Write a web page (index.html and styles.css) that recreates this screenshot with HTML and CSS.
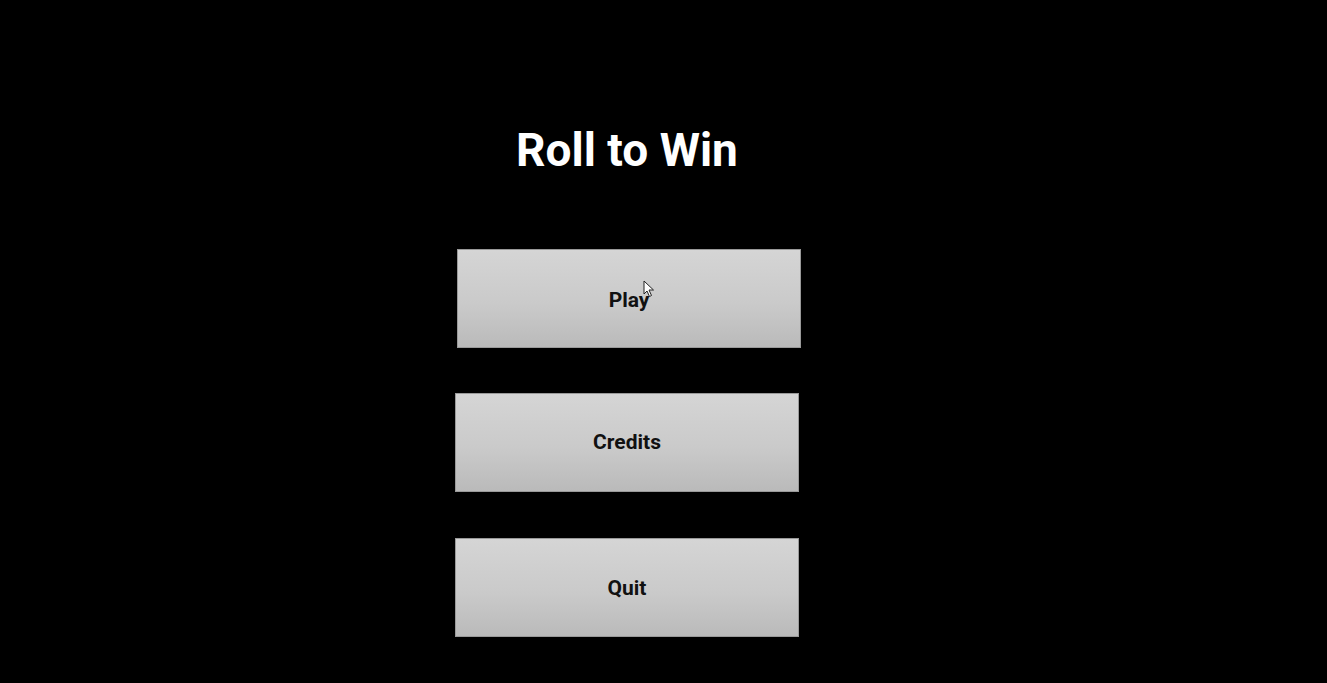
FILE: index.html
```html
<!DOCTYPE html>
<html lang="en">
<head>
    <meta charset="UTF-8">
    <title>Roll to Win</title>
    <link rel="stylesheet" href="styles.css">
</head>
<body>
<div class="menu">
    <h1 class="title">Roll to Win</h1>
    <a class="btn btn-play" href="#play">Play</a>
    <a class="btn btn-credits" href="#credits">Credits</a>
    <a class="btn btn-quit" href="#quit">Quit</a>
</div>
<svg class="cursor" width="12" height="18" viewBox="0 0 12 18">
    <path d="M1 1 L1 14 L4 11 L6.5 16.5 L8.5 15.5 L6 10 L10.5 10 Z" fill="#fff" stroke="#222" stroke-width="1"/>
</svg>
</body>
</html>
```

FILE: styles.css
```css
html, body{
    margin: 0;
    height: 100%;
    background: #000;
}
body{
    position: relative;
    overflow: hidden;
}
.menu{
    display: flex;
    flex-direction: column;
    width: 344px;
    margin-left: 455px;
}
.title{
    margin: 119px 0 0 0;
    height: 78px;
    line-height: 62px;
    text-align: center;
    color: #fff;
    font-family: Roboto, sans-serif;
    font-weight: 700;
    font-size: 46px;
}
.btn{
    display: flex;
    align-items: center;
    justify-content: center;
    height: 99px;
    box-sizing: border-box;
    border: 1px solid #9a9a9a;
    background: linear-gradient(to bottom, #d5d5d5 0%, #cacaca 55%, #bababa 100%);
    color: #111;
    text-decoration: none;
    font-family: Roboto, sans-serif;
    font-weight: 700;
    font-size: 21px;
}
.btn-play{
    margin: 52px -2px 0 2px;
    padding-top: 2px;
}
.btn-credits{
    margin-top: 45px;
    padding-bottom: 2px;
}
.btn-quit{
    margin-top: 46px;
}
.cursor{
    position: absolute;
    left: 643px;
    top: 280px;
}
```
